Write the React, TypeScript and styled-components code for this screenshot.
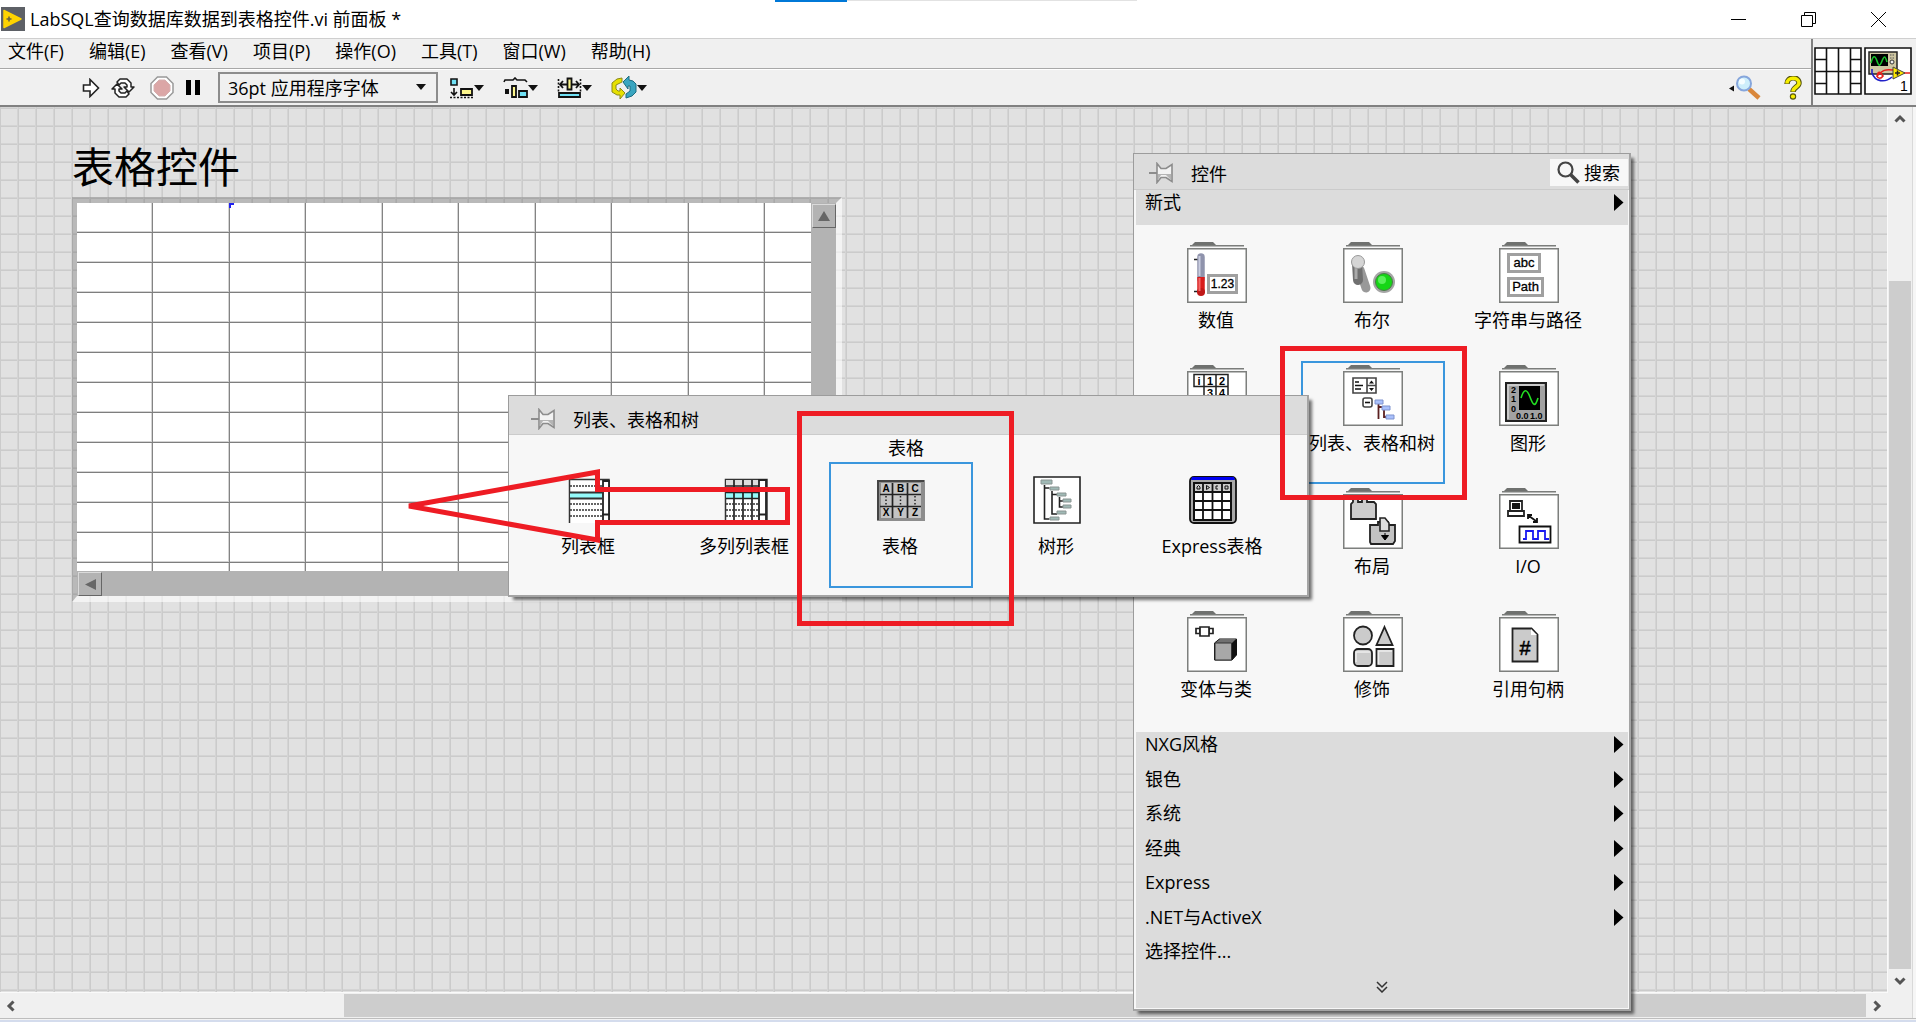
import React from 'react';
import styled, { createGlobalStyle } from 'styled-components';

const RED = '#ee1c24';

const GlobalStyle = createGlobalStyle`
  *, *::before, *::after { box-sizing: border-box; }
  html, body, #root { height: 100%; }
  body {
    margin: 0;
    overflow: hidden;
    background: #f0f0f0;
    color: #000;
    font: 18px/24px "Open Sans", "Noto Sans CJK SC", sans-serif;
  }
  button, select {
    margin: 0;
    padding: 0;
    border: 0;
    background: none;
    color: inherit;
    font: inherit;
  }
  svg { display: block; flex: none; }
  svg text { font-family: "Liberation Sans", sans-serif; }
`;

/* ---------- window chrome ---------- */

const Window = styled.div`
  display: flex;
  flex-direction: column;
  height: 100vh;
  position: relative;
`;

const Progress = styled.div`
  position: absolute;
  top: 0;
  left: 775px;
  width: 362px;
  height: 2px;
  border-left: 72px solid #0078d7;
  background: linear-gradient(#e2e2e2 50%, transparent 50%);
`;

const TitleBar = styled.header`
  display: flex;
  align-items: center;
  flex: none;
  height: 38px;
  padding: 0 3px 0 1px;
  background: #fff;
`;

const Title = styled.h1`
  flex: 1;
  margin: 0 0 0 5px;
  font-size: 18px;
  font-weight: 400;
  line-height: 38px;
`;

const WindowButton = styled.button`
  display: grid;
  place-items: center;
  width: 70px;
  height: 36px;
`;

const Header = styled.div`
  display: flex;
  flex: none;
  border-top: 1px solid #cfcfcf;
  border-bottom: 2px solid #808080;
  background: #f0f0f0;
`;

const Bars = styled.div`
  flex: 1;
`;

const MenuBar = styled.nav`
  display: flex;
  gap: 25px;
  height: 30px;
  padding-left: 8px;
  border-bottom: 1px solid #a8a8a8;
`;

const MenuItem = styled.button`
  height: 24px;
  line-height: 24px;
  white-space: nowrap;
`;

const ToolBar = styled.div`
  display: flex;
  align-items: center;
  height: 36px;
  padding: 0 9px 0 82px;
  border-top: 1px solid #fff;
`;

const ToolButton = styled.button<{ $gap?: number }>`
  display: flex;
  align-items: center;
  margin-right: ${(p) => p.$gap ?? 0}px;
`;

const FontPicker = styled.label`
  position: relative;
  width: 220px;
  margin-right: 11px;
`;

const FontSelect = styled.select`
  display: block;
  width: 100%;
  height: 31px;
  padding-left: 8px;
  border: 2px solid #8c8c8c;
  background: #f0f0f0;
  line-height: 26px;
  appearance: none;
`;

const PickerArrow = styled.svg`
  position: absolute;
  top: 12px;
  right: 12px;
  pointer-events: none;
`;

const Spacer = styled.div`
  flex: 1;
`;

const VIPane = styled.div`
  display: flex;
  gap: 2px;
  padding: 8px 4px 0 1px;
  border-left: 2px solid #808080;
`;

/* ---------- workspace ---------- */

const Workspace = styled.main`
  position: relative;
  display: grid;
  grid-template-columns: 1fr 24px 4px;
  grid-template-rows: 1fr 25px 4px;
  flex: 1;
  min-height: 0;
`;

const Canvas = styled.section`
  position: relative;
  overflow: hidden;
  border-right: 1px solid #fafafa;
  border-bottom: 1px solid #fafafa;
  background-color: #e1e1e1;
  background-image:
    linear-gradient(90deg, #cbcbcb 1px, transparent 1px, transparent 17px, #d4d4d4 17px),
    linear-gradient(#cbcbcb 1px, transparent 1px, transparent 17px, #d4d4d4 17px);
  background-size: 18px 18px;
  background-position: 0 1px;
`;

const ScrollBar = styled.div<{ $vertical?: boolean }>`
  display: flex;
  flex-direction: ${(p) => (p.$vertical ? 'column' : 'row')};
  padding: ${(p) => (p.$vertical ? '0 1px' : '1px 0')};
  background: #f0f0f0;
`;

const ScrollArrow = styled.button`
  display: grid;
  place-items: center;
  flex: none;
  width: 22px;
  height: 24px;
`;

const ScrollPart = styled.div<{ $grow: number; $thumb?: boolean }>`
  flex: ${(p) => p.$grow} 1 0;
  background: ${(p) => (p.$thumb ? '#cdcdcd' : 'transparent')};
`;

const RightEdge = styled.div`
  grid-row: 1 / 3;
  grid-column: 3;
  border-left: 1px solid #d9d9d9;
  background: #f6f6f6;
`;

const BottomEdge = styled.div`
  grid-column: 1 / 4;
  border-top: 1px solid #bdbdbd;
  border-bottom: 2px solid #d4dced;
  background: #f3f3f3;
`;

const TableControl = styled.section`
  position: absolute;
  top: 36px;
  left: 72px;
`;

const ControlLabel = styled.h2`
  margin: 0;
  height: 54px;
  font-size: 42px;
  font-weight: 400;
  line-height: 48px;
`;

const Bevel = styled.div`
  display: grid;
  grid-template-columns: 734px 25px;
  grid-template-rows: 368px 25px;
  width: max-content;
  border: 6px solid;
  border-left-width: 5px;
  border-color: rgba(60, 60, 60, 0.24) rgba(255, 255, 255, 0.6) rgba(255, 255, 255, 0.6) rgba(60, 60, 60, 0.24);
`;

const GridView = styled.div`
  position: relative;
  overflow: hidden;
  background: #fff;
`;

const CellTable = styled.table`
  width: 100%;
  table-layout: fixed;
  border-collapse: separate;
  border-spacing: 0;
`;

const Cell = styled.td<{ $w: number }>`
  width: ${(p) => p.$w}px;
  height: 30px;
  padding: 0;
  border-right: 1px solid #848484;
  border-bottom: 1px solid #7e7e7e;
  box-shadow: inset -1px -1px 0 #d4d4d4;

  &:last-child { border-right: 0; box-shadow: inset 0 -1px 0 #d4d4d4; }
`;

const Cursor = styled.i`
  position: absolute;
  top: 0;
  left: 152px;
  width: 5px;
  height: 5px;
  border-top: 2px solid #2020f0;
  border-left: 2px solid #2020f0;
`;

const GrayTrack = styled.div`
  padding: 1px;
  background: #b3b3b3;
`;

const GrayArrow = styled.button`
  display: grid;
  place-items: center;
  width: 24px;
  height: 24px;
  border: 1px solid;
  border-color: #dadada #666 #666 #dadada;
  background: #b3b3b3;
`;

/* ---------- palettes ---------- */

const Palette = styled.section<{ $x: number; $y: number; $w: number }>`
  position: absolute;
  top: ${(p) => p.$y}px;
  left: ${(p) => p.$x}px;
  width: ${(p) => p.$w}px;
  border: 1px solid #9c9c9c;
  border-right: 2px solid #a4a4a4;
  border-bottom: 2px solid #a4a4a4;
  background: #f7f7f7;
  box-shadow: 4px 4px 3px -1px rgba(0, 0, 0, 0.55);
`;

const PaletteHeader = styled.div<{ $h: number; $indent: number; $top: number }>`
  display: flex;
  align-items: center;
  height: ${(p) => p.$h}px;
  padding: ${(p) => p.$top}px 0 0 ${(p) => p.$indent}px;
  border-bottom: 1px solid #cbcbcb;
  background: #dcdcdc;
`;

const PaletteTitle = styled.h3`
  flex: 1;
  margin: 0 0 0 18px;
  padding-top: 2px;
  font-size: 18px;
  font-weight: 400;
`;

const SearchButton = styled.button`
  display: flex;
  align-items: center;
  gap: 4px;
  height: 27px;
  margin-right: 1px;
  padding: 0 8px 0 7px;
  background: #f7f7f7;
  line-height: 26px;
`;

const PaletteBody = styled.div`
  padding: 0 1px 1px 2px;
`;

const CategoryList = styled.ul<{ $h: number }>`
  display: grid;
  grid-auto-rows: 1fr;
  height: ${(p) => p.$h}px;
  margin: 0;
  padding: 0;
  background: #dcdcdc;
  list-style: none;
`;

const Category = styled.button`
  display: flex;
  align-items: center;
  justify-content: space-between;
  width: 100%;
  height: 25px;
  padding: 0 4px 0 9px;
  line-height: 25px;
`;

const More = styled.button`
  display: flex;
  justify-content: center;
  width: 100%;
  height: 34px;
  padding-top: 7px;
  background: #dcdcdc;
`;

const Tiles = styled.div<{ $cols: number; $pad: string }>`
  display: grid;
  grid-template-columns: repeat(${(p) => p.$cols}, 144px);
  column-gap: 12px;
  padding: ${(p) => p.$pad};
`;

const Tile = styled.button<{ $large?: boolean; $selected?: boolean }>`
  display: flex;
  flex-direction: column;
  align-items: center;
  justify-content: flex-start;
  gap: ${(p) => (p.$large ? 5 : 10)}px;
  height: ${(p) => (p.$large ? 123 : 126)}px;
  padding-top: ${(p) => (p.$large ? 4 : 14)}px;
  outline: ${(p) => (p.$selected ? '2px solid #3a96dd' : 'none')};
  outline-offset: -2px;
  white-space: nowrap;
`;

const TileLabel = styled.span`
  padding-right: 2px;
`;

const Hint = styled.div`
  height: 27px;
  padding-right: 4px;
  line-height: 26px;
  text-align: center;
`;

const Marks = styled.svg`
  position: absolute;
  top: 0;
  left: 0;
  pointer-events: none;
`;

/* ---------- drawings ---------- */

const Pin = () => (
  <svg width="24" height="22" viewBox="0 0 24 22">
    <path d="M0 11h8" stroke="#8c8c8c" strokeWidth="2" />
    <path d="M8 1.500l4 5h5l6-4v17l-6-4h-5l-4 5z" fill="#f2f2f2" stroke="#8c8c8c" strokeWidth="1.600" />
    <path d="M9 18l3-5h5l5 5v-6H9z" fill="#b4b4b4" />
  </svg>
);

const Caret = () => (
  <svg width="10" height="6" viewBox="0 0 10 6"><path d="M0 0h10L5 6z" fill="#111" /></svg>
);

const Chevron = ({ turn }: { turn: number }) => (
  <svg width="12" height="12" viewBox="0 0 12 12">
    <path d="M1.500 8.500L6 4l4.500 4.500" transform={`rotate(${turn} 6 6)`} fill="none" stroke="#555" strokeWidth="3" />
  </svg>
);

const Logo = () => (
  <svg width="24" height="24" viewBox="0 0 24 24">
    <path d="M0 0h24v24H0z" fill="#5d6066" />
    <path d="M3 3.500L20 12 3 20.500z" fill="#ffd400" stroke="#ffd400" strokeWidth="1.500" strokeLinejoin="round" />
    <path d="M5.500 12h5M8 9.500v5" stroke="#6a6440" strokeWidth="1.600" />
  </svg>
);

const RunIcon = () => (
  <svg width="18" height="20" viewBox="0 0 18 20">
    <path d="M1.500 7H8V1.500L16.500 10 8 18.500V13H1.500z" fill="#fff" stroke="#222" strokeWidth="1.600" />
  </svg>
);

const RunLoopIcon = () => (
  <svg width="24" height="20" viewBox="0 0 24 20" fill="#fff" stroke="#222" strokeWidth="1.500" strokeLinejoin="round">
    <path d="M6 4l3-3h7l4 4v4h3l-5 5-5-5h3V7l-2-2h-4l-2 2z" />
    <path d="M18 16l-3 3H8l-4-4v-4H1l5-5 5 5H8v2l2 2h4l2-2z" />
  </svg>
);

const AbortIcon = () => (
  <svg width="24" height="24" viewBox="0 0 24 24">
    <path d="M7.500 1h9L23 7.500v9L16.500 23h-9L1 16.500v-9z" fill="#fff" stroke="#999" strokeWidth="1.500" />
    <path d="M9 4h6l5 5v6l-5 5H9l-5-5V9z" fill="#dba6a6" stroke="#d6b0b0" />
  </svg>
);

const PauseIcon = () => (
  <svg width="15" height="15" viewBox="0 0 15 15"><path d="M0 0h5v15H0zM9 0h5v15H9z" fill="#000" /></svg>
);

const AlignIcon = () => (
  <svg width="25" height="22" viewBox="0 0 25 22">
    <path d="M2 2h6v6H2z" fill="#6fe0f4" stroke="#111" strokeWidth="1.600" />
    <path d="M5 11v7M2 15l3 3 3-3" fill="none" stroke="#111" strokeWidth="1.600" />
    <path d="M1 20.500h23" stroke="#111" strokeWidth="1.600" strokeDasharray="2 1.500" />
    <path d="M12 12h11v6H12z" fill="#fbf58c" stroke="#111" strokeWidth="1.800" />
  </svg>
);

const DistributeIcon = () => (
  <svg width="25" height="22" viewBox="0 0 25 22">
    <path d="M1 5l1-2h8l2-2 2 2h8l2 2" fill="none" stroke="#111" strokeWidth="1.600" />
    <path d="M2 12h4v5H2z" fill="#111" />
    <path d="M9 9h4v11H9z" fill="#fbf58c" stroke="#111" strokeWidth="1.800" />
    <path d="M16 14h8v6h-8z" fill="#6fe0f4" stroke="#111" strokeWidth="1.800" />
  </svg>
);

const ResizeIcon = () => (
  <svg width="25" height="22" viewBox="0 0 25 22">
    <path d="M1.500 2v14M23.500 2v14" stroke="#111" strokeWidth="1.600" strokeDasharray="2 1.500" />
    <path d="M3 7.500h19M6 4L3 7.500 6 11M19 4l3 3.500-3 3.500" fill="none" stroke="#111" strokeWidth="1.800" />
    <path d="M10.500 1.500h4v11h-4z" fill="#fbf58c" stroke="#111" strokeWidth="1.800" />
    <path d="M2 16h21v4H2z" fill="#6fe0f4" stroke="#111" strokeWidth="1.800" />
  </svg>
);

const ReorderIcon = () => (
  <svg width="26" height="24" viewBox="0 0 26 24">
    <path d="M11 2L6 3 1 7v9l5 3h3v4l5-6-5-5v3H7l-2-2V9l6-3z" fill="#e6e000" stroke="#8b8a1a" />
    <path d="M12 6l6-6v4l4 1 3 3v8l-4 4-6 2v-4l4-3v-5h-2v3z" fill="#39a5c0" stroke="#1c6c80" />
  </svg>
);

const FindIcon = () => (
  <svg width="32" height="25" viewBox="0 0 32 25">
    <path d="M0 13.500l5-3v6z" fill="#111" />
    <path d="M20 14l10 9" stroke="#d9873b" strokeWidth="4.500" />
    <circle cx="15" cy="8.500" r="7" fill="#cdeefb" stroke="#86a6dc" strokeWidth="2" />
    <circle cx="13" cy="6.500" r="3" fill="#f5fdff" />
  </svg>
);

const HelpIcon = () => (
  <svg width="18" height="24" viewBox="0 0 18 24">
    <path d="M3 8c0-8 12-8 12-1 0 4-6 4-6 9" fill="none" stroke="#555310" strokeWidth="5.500" />
    <circle cx="9" cy="20.500" r="3.200" fill="#555310" />
    <path d="M3 7.500c0-7 12-7 12-.500 0 4-6 4-6 8.500" fill="none" stroke="#f6ee00" strokeWidth="3.500" />
    <circle cx="9" cy="20.500" r="2.100" fill="#f6ee00" />
  </svg>
);

const ConnectorPane = () => (
  <svg width="48" height="48" viewBox="0 0 48 48">
    <path
      d="M1 1h46v46H1zM12.500 1v46M24.500 1v46M36.500 1v46M1 24.500h46M1 12.500h11.500M1 36.500h11.500M36.500 12.500H47M36.500 36.500H47"
      fill="#fff"
      stroke="#111"
      strokeWidth="1.600"
    />
  </svg>
);

const VIIcon = () => (
  <svg width="48" height="48" viewBox="0 0 48 48">
    <path d="M1 1h46v46H1z" fill="#fff" stroke="#111" strokeWidth="1.600" />
    <path d="M5 5h28v22H5z" fill="#cfc7a2" stroke="#222" strokeWidth="1.500" />
    <path d="M7 7h17v12H7z" fill="#000" />
    <path d="M7 16c2-8 4-8 6-2s3 5 5 0 3-6 5 1" fill="none" stroke="#19c22c" strokeWidth="1.600" />
    <path d="M26 8h5M26 11h5" stroke="#555" strokeDasharray="1.500 1" />
    <circle cx="28" cy="15" r="2" fill="#eee" stroke="#333" />
    <path d="M8 22v4c3 9 13 10 20 4" fill="none" stroke="#2020c8" strokeWidth="1.600" />
    <path d="M13 30c1-8 4-4 6-1-2 3-5 3-6 0 6-6 8-7 16-6M40 26h6" fill="none" stroke="#e8201c" strokeWidth="1.600" />
    <path d="M29 20l12 6-12 6z" fill="#ffe900" stroke="#444" />
    <path d="M31 26h5M33.500 23.500v5" stroke="#222" strokeWidth="1.500" />
    <text x="36" y="44" fontSize="14">1</text>
  </svg>
);

const SearchIcon = () => (
  <svg width="23" height="23" viewBox="0 0 23 23">
    <circle cx="8.500" cy="8.500" r="7" fill="none" stroke="#444" strokeWidth="2.200" />
    <path d="M13 13l8.500 8.500" stroke="#444" strokeWidth="3.500" />
  </svg>
);

const Folder = ({ children }: { children?: React.ReactNode }) => (
  <svg width="60" height="61" viewBox="0 0 60 61">
    <path d="M5 3l3-3h18l3 3z" fill="#6f716f" />
    <path d="M3 3.700h54" stroke="#7b7d7b" strokeWidth="1.500" />
    <path d="M.75 6.750h58.500v53.500H.75z" fill="#fff" stroke="#7d7f7d" strokeWidth="1.500" />
    {children}
  </svg>
);

const Field = ({ x, y, w, label, size = 12 }: { x: number; y: number; w: number; label: string; size?: number }) => (
  <>
    <rect x={x + 1.500} y={y + 1.500} width={w - 3} height="17" fill="#fff" stroke="#a0a0a0" strokeWidth="3" />
    <text x={x + w / 2} y={y + 14} fontSize={size} textAnchor="middle" fill="#000" stroke="#000" strokeWidth=".3">{label}</text>
  </>
);

const NumericIcon = () => (
  <Folder>
    <path d="M7 17.500h5M7 49.500h5" stroke="#222" strokeWidth="1.500" />
    <path d="M14 15v22" stroke="#8f93ac" strokeWidth="7.500" strokeLinecap="round" />
    <path d="M14 35v16" stroke="#d81c1c" strokeWidth="7.500" />
    <circle cx="14" cy="50" r="4" fill="#c01818" />
    <path d="M12.500 14v20" stroke="#c9cde0" strokeWidth="2" />
    <path d="M12.500 36v13" stroke="#f46a6a" strokeWidth="2" />
    <Field x={20} y={32} w={31} label="1.23" />
  </Folder>
);

const BooleanIcon = () => (
  <Folder>
    <path d="M17 28l6 18" stroke="#999" strokeWidth="9" strokeLinecap="round" />
    <path d="M14 21l1 17" stroke="#707070" strokeWidth="10" strokeLinecap="round" />
    <path d="M13 22v15" stroke="#aaa" strokeWidth="3" />
    <circle cx="15" cy="20" r="6.500" fill="#d5d5d5" stroke="#999" />
    <circle cx="41" cy="40" r="11" fill="#a5a5a5" />
    <circle cx="41" cy="40" r="8.500" fill="#16d616" stroke="#4b7a4b" />
    <circle cx="39" cy="38" r="4" fill="#5bf05b" />
  </Folder>
);

const StringIcon = () => (
  <Folder>
    <Field x={8} y={11} w={34} label="abc" size={13} />
    <Field x={8} y={35} w={37} label="Path" size={13} />
  </Folder>
);

const ArrayIcon = () => (
  <Folder>
    <path d="M7 9.500h34v12H7zM17 9.500V40M29 9.500V40M41 20v20" fill="none" stroke="#222" strokeWidth="1.500" />
    {[['i', 12, 20], ['1', 23, 20], ['2', 35, 20], ['3', 23, 32], ['4', 35, 32]].map(([t, x, y]) => (
      <text key={t} x={x} y={y} fontSize="11" fontWeight="700" textAnchor="middle">{t}</text>
    ))}
  </Folder>
);

const ListTreeIcon = () => (
  <Folder>
    <path d="M10 13h23v15H10zM24 13v15M24 20.500h9" fill="#fff" stroke="#444" strokeWidth="1.600" />
    <path d="M12 17h4M12 20.500h8M12 24h6" stroke="#111" strokeWidth="1.600" />
    <path d="M26 18.500l2.500-3 2.500 3zM26 23l2.500 3 2.500-3z" fill="#111" />
    <rect x="20" y="33" width="9" height="9" rx="2" fill="#fff" stroke="#444" strokeWidth="1.600" />
    <path d="M22 37.500h5" stroke="#111" strokeWidth="1.600" />
    <path d="M35.500 38v16M35 42h6v10h4" fill="none" stroke="#5b2020" strokeWidth="1.800" />
    <path d="M32 35h8v4h-8zM39 41h8v4h-8zM43 50h8v4h-8z" fill="#a9c0fb" stroke="#7f93cf" />
  </Folder>
);

const GraphIcon = () => (
  <Folder>
    <path d="M7 18h40v38H7z" fill="#a2a2a2" stroke="#222" strokeWidth="2" />
    <path d="M9 54V20h36" fill="none" stroke="#d8d8d8" strokeWidth="1.500" />
    <path d="M20 21h21v24H20z" fill="#000" />
    <path d="M22 33c3-10 6-9 9-1s5 11 8 1" fill="none" stroke="#22e022" strokeWidth="1.600" />
    <g fontSize="9" fontWeight="700">
      <text x="12" y="28">2</text>
      <text x="12" y="37">1</text>
      <text x="12" y="47">0</text>
      <text x="17" y="54">0.0</text>
      <text x="31" y="54">1.0</text>
    </g>
  </Folder>
);

const LayoutIcon = () => (
  <Folder>
    <path d="M8 31V16l2-2v-3h5v3h4v-3h5v3h7l2 2v15z" fill="#ccc" stroke="#222" strokeWidth="1.800" />
    <path d="M27 37h8v-3h10v3h7v16l-2 3H28l-1-2z" fill="#c2c2c2" stroke="#222" strokeWidth="1.800" />
    <path d="M37 43V30h5l4 5v8z" fill="#ddd" stroke="#222" strokeWidth="1.600" />
    <path d="M42 45v4M38.500 47.500h7L42 52z" fill="#000" stroke="#000" />
  </Folder>
);

const IOIcon = () => (
  <Folder>
    <path d="M11 13h12v10H11zM9 23h16v5H9z" fill="#fff" stroke="#222" strokeWidth="1.800" />
    <path d="M13 15h8v6h-8z" fill="#111" />
    <path d="M30 28l7 5M29 31v-4h4M34 34h4v-4" fill="none" stroke="#111" strokeWidth="1.800" />
    <path d="M20.500 38.500h31v16h-31z" fill="#fff" stroke="#111" strokeWidth="1.800" />
    <path d="M24 51h3v-8h7v8h5v-8h7v8h4" fill="none" stroke="#1a1af0" strokeWidth="1.800" />
  </Folder>
);

const VariantIcon = () => (
  <Folder>
    <path d="M9 17.500h4v5H9zM22 17.500h4v5h-4z" fill="#fff" stroke="#222" strokeWidth="1.700" />
    <path d="M13 16h9v9h-9z" fill="#fff" stroke="#222" strokeWidth="1.700" />
    <path d="M27.500 32l5-4h17v16l-4.500 5H27.500z" fill="#111" stroke="#111" />
    <path d="M28 32l5-4h16l-4 4z" fill="#707070" />
    <path d="M28 32h16.500v17H28z" fill="#a8a8a8" stroke="#333" />
  </Folder>
);

const DecorationIcon = () => (
  <Folder>
    <g fill="#cbcbcb" stroke="#222" strokeWidth="1.800">
      <circle cx="20" cy="24.500" r="9" />
      <path d="M41.500 16l8 18h-16z" />
      <rect x="11" y="38" width="18" height="17" rx="4" />
      <path d="M33.500 38h17v17h-17z" />
    </g>
    <path d="M13 51V41h14M35.500 53V40H49" fill="none" stroke="#eee" strokeWidth="1.500" />
  </Folder>
);

const RefnumIcon = () => (
  <Folder>
    <path d="M13.500 17.500h19l6 6v27h-25z" fill="#cbcbcb" stroke="#222" strokeWidth="1.800" />
    <path d="M32 18v6h6z" fill="#fff" />
    <text x="26" y="44" fontSize="20" textAnchor="middle" stroke="#000" strokeWidth=".5">#</text>
  </Folder>
);

const ListboxIcon = () => (
  <svg width="48" height="48" viewBox="0 0 48 48">
    <path d="M4.500 47V3.500H44V47" fill="#fff" stroke="#333" strokeWidth="1.500" />
    <path d="M5 17h32v5H5z" fill="#94fbfb" />
    <path d="M5 16.500h32M5 22.500h32" stroke="#333" strokeWidth="1.800" />
    <path d="M5 10h32M5 28h32M5 34h32M5 40h32" stroke="#333" strokeWidth="1.500" strokeDasharray="2 1" />
    <path d="M38 5h6v40h-6zM37 38.500h8" fill="#fff" stroke="#222" strokeWidth="1.800" />
  </svg>
);

const MultiListIcon = () => (
  <svg width="48" height="48" viewBox="0 0 48 48">
    <path d="M4.500 46V3.500H46V46z" fill="#fff" stroke="#333" strokeWidth="1.500" />
    <path d="M5 4h33v7H5z" fill="#ddd" />
    <path d="M5 17h33v5H5z" fill="#94fbfb" />
    <path d="M5 10h33M5 16.500h33M5 22.500h33M13 4v42M22 4v42M31 4v42" stroke="#222" strokeWidth="1.700" />
    <path d="M5 28h33M5 34h33M5 40h33" stroke="#333" strokeWidth="1.500" strokeDasharray="2 1" />
    <path d="M38 4h7v41h-7zM38 38.500h7" fill="#fff" stroke="#222" strokeWidth="1.800" />
  </svg>
);

const TableIcon = () => (
  <svg width="48" height="48" viewBox="0 0 48 48">
    <path d="M0 4h48v41H0z" fill="#8d8d8d" />
    <path d="M1 44V5h46" fill="none" stroke="#444" strokeWidth="2" />
    <path d="M4 7h40v35H4z" fill="#c4c4c4" />
    <path d="M3 18.500h41M3 30.500h41M15.500 7v35M30.500 7v35" stroke="#222" strokeWidth="1.700" />
    {['A', 'B', 'C'].map((t, i) => (
      <text key={t} x={9 + i * 14.500} y="16" fontSize="10" fontWeight="700" textAnchor="middle">{t}</text>
    ))}
    {['X', 'Y', 'Z'].map((t, i) => (
      <text key={t} x={9 + i * 14.500} y="40" fontSize="10" fontWeight="700" textAnchor="middle">{t}</text>
    ))}
    <path d="M9 20v9M23.500 20v9M38 20v9" stroke="#222" strokeWidth="1.500" strokeDasharray="1.500 2" />
  </svg>
);

const TreeIcon = () => (
  <svg width="48" height="48" viewBox="0 0 48 48">
    <path d="M1 1h46v46H1z" fill="#fff" stroke="#222" strokeWidth="1.600" />
    <path d="M11.500 9v34h5M11.500 12h5M19 15v23h5M19 18.500h5M26.500 21v10h4M26.500 25h4" fill="none" stroke="#222" strokeWidth="1.600" />
    <path
      d="M8 4h11v4H8zM17 11h9v3h-9zM24 17h9v3h-9zM30 23h8v3h-8zM30 29h8v3h-8zM24 35h9v3h-9zM17 41h9v3h-9z"
      fill="#9fb9b5"
      stroke="#8a9492"
    />
  </svg>
);

const ExpressIcon = () => (
  <svg width="48" height="48" viewBox="0 0 48 48">
    <rect x="1" y="1" width="46" height="46" rx="4" fill="#a9a9a9" stroke="#111" strokeWidth="1.800" />
    <path d="M3 1h42l1 3H2z" fill="#0000f0" />
    <path d="M5 7h37v37H5z" fill="#fff" stroke="#111" strokeWidth="2" />
    <path d="M6 8h35v7H6z" fill="#ccc" />
    <path d="M5 16h37M5 25h37M5 34h37M14 7v37M23.500 7v37M33 7v37" stroke="#111" strokeWidth="1.800" />
    <path d="M8 13v-2l1.500-1.500L11 11v2zM17.500 9.500v4l3-2zM29 10h-2v3h2M36 10h3v3h-3z" fill="none" stroke="#111" />
  </svg>
);

/* ---------- data ---------- */

const MENUS = ['文件(F)', '编辑(E)', '查看(V)', '项目(P)', '操作(O)', '工具(T)', '窗口(W)', '帮助(H)'];
const CATEGORIES = ['NXG风格', '银色', '系统', '经典', 'Express', '.NET与ActiveX'];
const COLUMN_WIDTHS = [76, 77, 76, 77, 76, 77, 76, 77, 76, 46];

type TileData = { id: string; label?: string; icon: React.ReactNode; selected?: boolean };

const MODERN: TileData[] = [
  { id: 'numeric', label: '数值', icon: <NumericIcon /> },
  { id: 'boolean', label: '布尔', icon: <BooleanIcon /> },
  { id: 'string', label: '字符串与路径', icon: <StringIcon /> },
  { id: 'array', icon: <ArrayIcon /> },
  { id: 'list', label: '列表、表格和树', icon: <ListTreeIcon />, selected: true },
  { id: 'graph', label: '图形', icon: <GraphIcon /> },
  { id: 'ring', icon: <Folder /> },
  { id: 'layout', label: '布局', icon: <LayoutIcon /> },
  { id: 'io', label: 'I/O', icon: <IOIcon /> },
  { id: 'variant', label: '变体与类', icon: <VariantIcon /> },
  { id: 'decoration', label: '修饰', icon: <DecorationIcon /> },
  { id: 'refnum', label: '引用句柄', icon: <RefnumIcon /> },
];

const LISTS: TileData[] = [
  { id: 'listbox', label: '列表框', icon: <ListboxIcon /> },
  { id: 'multilist', label: '多列列表框', icon: <MultiListIcon /> },
  { id: 'table', label: '表格', icon: <TableIcon />, selected: true },
  { id: 'tree', label: '树形', icon: <TreeIcon /> },
  { id: 'express', label: 'Express表格', icon: <ExpressIcon /> },
];

const CategoryArrow = () => (
  <svg width="10" height="17" viewBox="0 0 10 17"><path d="M0 0l9.500 8.500L0 17z" fill="#000" /></svg>
);

/* ---------- sections ---------- */

const TitleRow = () => (
  <TitleBar>
    <Logo />
    <Title>LabSQL查询数据库数据到表格控件.vi 前面板 *</Title>
    <WindowButton aria-label="最小化">
      <svg width="15" height="15"><path d="M0 7.500h15" stroke="#000" /></svg>
    </WindowButton>
    <WindowButton aria-label="还原">
      <svg width="15" height="15"><path d="M.5 3.500h11v11H.5zM3.500 3.500v-3h11v11h-3" fill="none" stroke="#000" /></svg>
    </WindowButton>
    <WindowButton aria-label="关闭">
      <svg width="15" height="15"><path d="M0 0l15 15M15 0L0 15" stroke="#000" /></svg>
    </WindowButton>
  </TitleBar>
);

const HeaderRow = () => (
  <Header>
    <Bars>
      <MenuBar>
        {MENUS.map((m) => <MenuItem key={m}>{m}</MenuItem>)}
      </MenuBar>
      <ToolBar>
        <ToolButton $gap={11} aria-label="运行"><RunIcon /></ToolButton>
        <ToolButton $gap={15} aria-label="连续运行"><RunLoopIcon /></ToolButton>
        <ToolButton $gap={12} aria-label="中止执行"><AbortIcon /></ToolButton>
        <ToolButton $gap={17} aria-label="暂停"><PauseIcon /></ToolButton>
        <FontPicker>
          <FontSelect aria-label="字体">
            <option>36pt 应用程序字体</option>
          </FontSelect>
          <PickerArrow width="10" height="6" viewBox="0 0 10 6"><path d="M0 0h10L5 6z" fill="#111" /></PickerArrow>
        </FontPicker>
        <ToolButton $gap={19} aria-label="对齐对象"><AlignIcon /><Caret /></ToolButton>
        <ToolButton $gap={19} aria-label="分布对象"><DistributeIcon /><Caret /></ToolButton>
        <ToolButton $gap={19} aria-label="调整对象大小"><ResizeIcon /><Caret /></ToolButton>
        <ToolButton aria-label="重新排序"><ReorderIcon /><Caret /></ToolButton>
        <Spacer />
        <ToolButton $gap={23} aria-label="查找"><FindIcon /></ToolButton>
        <ToolButton aria-label="帮助"><HelpIcon /></ToolButton>
      </ToolBar>
    </Bars>
    <VIPane>
      <ConnectorPane />
      <VIIcon />
    </VIPane>
  </Header>
);

const TableFrontPanel = () => (
  <TableControl>
    <ControlLabel>表格控件</ControlLabel>
    <Bevel>
      <GridView>
        <CellTable aria-label="表格控件">
          <tbody>
            {Array.from({ length: 13 }, (_, r) => (
              <tr key={r}>
                {COLUMN_WIDTHS.map((w, c) => <Cell key={c} $w={w} />)}
              </tr>
            ))}
          </tbody>
        </CellTable>
        <Cursor />
      </GridView>
      <GrayTrack>
        <GrayArrow aria-label="向上滚动">
          <svg width="12" height="10"><path d="M6 0l6 10H0z" fill="#666" /></svg>
        </GrayArrow>
      </GrayTrack>
      <GrayTrack>
        <GrayArrow aria-label="向左滚动">
          <svg width="11" height="11"><path d="M0 5.500L11 0v11z" fill="#666" /></svg>
        </GrayArrow>
      </GrayTrack>
      <GrayTrack />
    </Bevel>
  </TableControl>
);

const ControlsPalette = () => (
  <Palette $x={1133} $y={46} $w={498}>
    <PaletteHeader $h={36} $indent={15} $top={2}>
      <Pin />
      <PaletteTitle>控件</PaletteTitle>
      <SearchButton><SearchIcon />搜索</SearchButton>
    </PaletteHeader>
    <PaletteBody>
      <CategoryList $h={35}>
        <li><Category>新式<CategoryArrow /></Category></li>
      </CategoryList>
      <Tiles $cols={3} $pad="13px 0 2px 9px">
        {MODERN.map((t) => (
          <Tile key={t.id} $large $selected={t.selected}>
            {t.icon}
            {t.label && <TileLabel>{t.label}</TileLabel>}
          </Tile>
        ))}
      </Tiles>
      <CategoryList $h={242}>
        {CATEGORIES.map((c) => (
          <li key={c}><Category>{c}<CategoryArrow /></Category></li>
        ))}
        <li><Category>选择控件...</Category></li>
      </CategoryList>
      <More aria-label="更多">
        <svg width="12" height="12"><path d="M1 1l5 5 5-5M1 6l5 5 5-5" fill="none" stroke="#333" strokeWidth="1.500" /></svg>
      </More>
    </PaletteBody>
  </Palette>
);

const ListsPalette = () => (
  <Palette $x={508} $y={288} $w={801}>
    <PaletteHeader $h={39} $indent={22} $top={7}>
      <Pin />
      <PaletteTitle>列表、表格和树</PaletteTitle>
    </PaletteHeader>
    <Hint>表格</Hint>
    <Tiles $cols={5} $pad="0 0 7px 8px">
      {LISTS.map((t) => (
        <Tile key={t.id} $selected={t.selected}>
          {t.icon}
          <TileLabel>{t.label}</TileLabel>
        </Tile>
      ))}
    </Tiles>
  </Palette>
);

const Annotations = () => (
  <Marks width="1480" height="540" fill="none" stroke={RED} strokeWidth="5">
    <path d="M799.500 306.500h212v210h-212z" />
    <path d="M1282.500 241.500h182v149h-182z" />
    <path d="M409 399L597.500 365v17.500h190v33h-190V433z" />
  </Marks>
);

export default function App() {
  return (
    <Window>
      <GlobalStyle />
      <TitleRow />
      <Progress />
      <HeaderRow />
      <Workspace>
        <Canvas>
          <TableFrontPanel />
        </Canvas>
        <ScrollBar $vertical>
          <ScrollArrow aria-label="向上"><Chevron turn={0} /></ScrollArrow>
          <ScrollPart $grow={149} />
          <ScrollPart $grow={686} $thumb />
          <ScrollArrow aria-label="向下"><Chevron turn={180} /></ScrollArrow>
        </ScrollBar>
        <RightEdge />
        <ScrollBar>
          <ScrollArrow aria-label="向左"><Chevron turn={270} /></ScrollArrow>
          <ScrollPart $grow={322} />
          <ScrollPart $grow={1520} $thumb />
          <ScrollArrow aria-label="向右"><Chevron turn={90} /></ScrollArrow>
        </ScrollBar>
        <ScrollBar />
        <BottomEdge />
        <ControlsPalette />
        <ListsPalette />
        <Annotations />
      </Workspace>
    </Window>
  );
}
